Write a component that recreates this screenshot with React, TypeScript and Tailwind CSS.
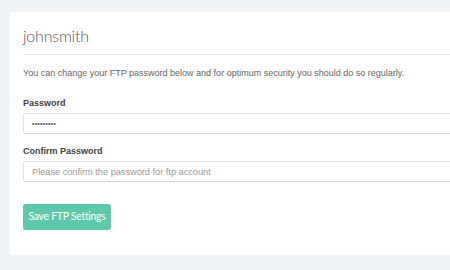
export default function App() {
  return (
    <div className="w-[450px] h-[270px] overflow-hidden bg-[#f0f4f7] pt-[12px] pl-[10px] font-['Liberation_Sans',Arial,sans-serif]">
      <div className="w-[470px] h-[243px] bg-white rounded-[3px] pl-[13px] pt-[12px]">
        <h1 className="text-[16px] leading-[24px] text-[#555] font-light font-['Lato',sans-serif] tracking-[-0.2px]">johnsmith</h1>
        <div className="mt-[6px] border-t border-[#eaeaea]" />
        <p className="mt-[11px] text-[9px] leading-[14px] text-[#666]">
          You can change your FTP password below and for optimum security you should do so regularly.
        </p>
        <form className="mt-[16px]">
          <label className="block text-[9px] leading-[14px] font-bold text-[#444]">Password</label>
          <input
            type="password"
            defaultValue="secretpw1"
            className="mt-[3px] block w-full h-[21px] px-[8px] border border-[#e3e3e3] border-b-[#d8d8d8] rounded-[2px] text-[7px] tracking-[0.2px] text-[#555] outline-none"
          />
          <label className="mt-[10px] block text-[9px] leading-[14px] font-bold text-[#444]">Confirm Password</label>
          <input
            type="password"
            placeholder="Please confirm the password for ftp account"
            className="mt-[3px] block w-full h-[21px] px-[8px] border border-[#e3e3e3] border-b-[#d8d8d8] rounded-[2px] text-[9.2px] text-[#555] placeholder:text-[#999] outline-none"
          />
          <button
            type="button"
            className="mt-[22px] w-[88px] h-[26px] rounded-[3px] bg-[#5dc9aa] text-white text-[10.5px] tracking-[-0.3px] font-['Lato',sans-serif]"
          >
            Save FTP Settings
          </button>
        </form>
      </div>
    </div>
  );
}
